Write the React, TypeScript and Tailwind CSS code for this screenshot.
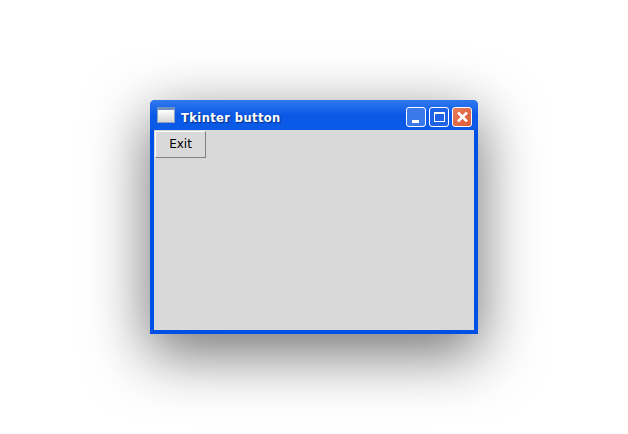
function TitleButton({ children, className }: { children: React.ReactNode; className: string }) {
  return (
    <div className={`flex h-[20px] w-[20px] items-center justify-center rounded-[3px] border border-white ${className}`}>
      {children}
    </div>
  );
}

export default function App() {
  return (
    <div className="h-[434px] w-[628px] overflow-hidden bg-white pl-[150px] pt-[100px] font-['DejaVu_Sans',sans-serif]">
      <div className="flex h-[234px] w-[328px] flex-col rounded-t-[5px] bg-[#0050e6] shadow-[0_18px_60px_2px_rgba(0,0,0,0.55)]">
        {/* title bar */}
        <div className="flex h-[30px] items-center rounded-t-[5px] bg-gradient-to-b from-[#2f79ee] via-[#0a58e6] to-[#0a5ae8] pl-[7px] pr-[6px]">
          <div className="mb-[1px] h-[16px] w-[18px] border border-[#8aa0c4] border-t-[3px] border-t-[#6f8fc0] bg-gradient-to-b from-white to-[#d6d6d6]" />
          <span className="ml-[6px] mt-[7px] text-[11.5px] font-bold tracking-[0.4px] text-white [text-shadow:1px_1px_1px_#0a2f80]">Tkinter button</span>
          <div className="ml-auto mt-[3px] flex gap-[3px]">
            <TitleButton className="bg-[#3b78ea]">
              <div className="ml-[-1px] mt-[9px] h-[3px] w-[7px] bg-white" />
            </TitleButton>
            <TitleButton className="bg-[#1f62e6]">
              <div className="h-[10px] w-[11px] border border-t-[2px] border-white" />
            </TitleButton>
            <TitleButton className="bg-gradient-to-br from-[#e87a58] to-[#dc5c38]">
              <svg viewBox="0 0 11 10" className="h-[10px] w-[11px]" fill="none" stroke="white" strokeWidth="2.6">
                <path d="M1 0.5 L10 9.5 M10 0.5 L1 9.5" />
              </svg>
            </TitleButton>
          </div>
        </div>
        {/* client area */}
        <div className="mx-[4px] mb-[4px] flex-1 bg-[#d9d9d9] pl-[1px] pt-[1px]">
          <button className="h-[27px] w-[51px] border border-t-white border-l-white border-r-[#7f7f7f] border-b-[#7f7f7f] bg-[#d9d9d9] pb-[1px] text-[12px] text-black">
            Exit
          </button>
        </div>
      </div>
    </div>
  );
}
